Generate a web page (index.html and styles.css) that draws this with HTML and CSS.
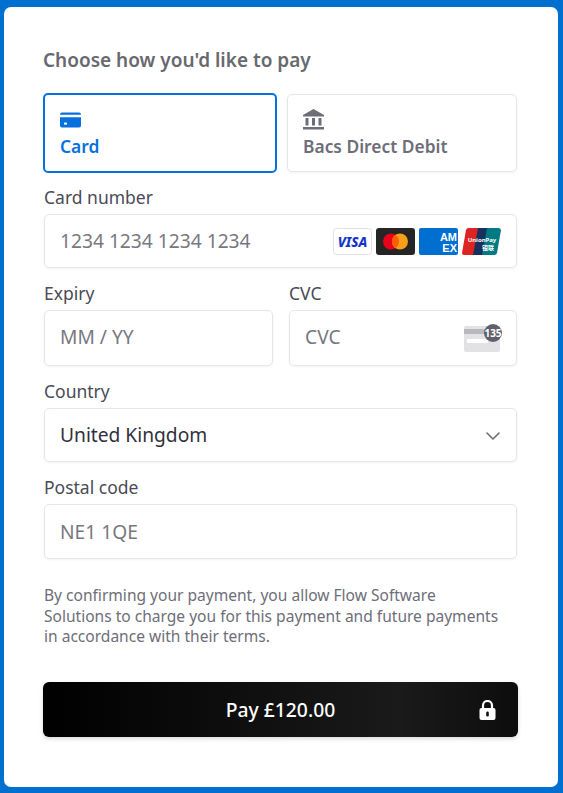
FILE: index.html
```html
<!DOCTYPE html>
<html lang="en">
<head>
<meta charset="utf-8">
<title>Payment</title>
<link rel="stylesheet" href="styles.css">
</head>
<body>
<main class="card">
  <h1 class="title">Choose how you'd like to pay</h1>
  <div class="tabs">
    <div class="tab tab-active">
      <svg class="tab-icon" viewBox="0 0 21 16" width="21" height="16"><path fill="#0570de" d="M0 2.6A2 2 0 0 1 2 .6h17a2 2 0 0 1 2 2v.2H0z"/><path fill="#0570de" d="M0 5.2h21v8.2a2 2 0 0 1-2 2H2a2 2 0 0 1-2-2z"/><rect x="4" y="10.6" width="3" height="2" fill="#fff"/></svg>
      <span>Card</span>
    </div>
    <div class="tab">
      <svg class="tab-icon" viewBox="0 0 21 21" width="21" height="21"><path fill="#6d6e78" d="M10.5 0 21 6v1.5H0V6z"/><rect x="2.5" y="9" width="3" height="7.5" fill="#6d6e78"/><rect x="9" y="9" width="3" height="7.5" fill="#6d6e78"/><rect x="15.5" y="9" width="3" height="7.5" fill="#6d6e78"/><rect x="0" y="18" width="21" height="2.5" fill="#6d6e78"/></svg>
      <span>Bacs Direct Debit</span>
    </div>
  </div>

  <div class="field field-first">
    <div class="label">Card number</div>
    <div class="input input-short">
      <span class="placeholder">1234 1234 1234 1234</span>
      <div class="brands">
        <svg viewBox="0 0 39 27" width="39" height="27"><rect x=".5" y=".5" width="38" height="26" rx="3" fill="#fff" stroke="#e0e0e6"/><text x="19.5" y="18.5" class="visa" text-anchor="middle">VISA</text></svg>
        <svg viewBox="0 0 39 27" width="39" height="27"><rect width="39" height="27" rx="3" fill="#252525"/><circle cx="15" cy="13.5" r="8" fill="#eb001b"/><circle cx="24" cy="13.5" r="8" fill="#f79e1b"/><path d="M19.5 6.9a8 8 0 0 1 0 13.200 8 8 0 0 1 0-13.200z" fill="#ff5f00"/></svg>
        <svg viewBox="0 0 39 27" width="39" height="27"><rect width="39" height="27" rx="2" fill="#016fd0"/><text x="38" y="13" class="amex" text-anchor="end">AM</text><text x="38" y="24" class="amex" text-anchor="end">EX</text></svg>
        <svg viewBox="0 0 39 27" width="39" height="27"><path d="M7 0h11l-5 27H2a2 2 0 0 1-2-2L4 2a3 3 0 0 1 3-2z" fill="#dd2423"/><path d="M16 0h11l-5 27H11z" fill="#16315e"/><path d="M25 0h11a3 3 0 0 1 3 2l-4 23a3 3 0 0 1-3 2H20z" fill="#007b84"/><text x="20" y="14" class="upay" text-anchor="middle">UnionPay</text><text x="26" y="22" class="upay" text-anchor="middle">银联</text></svg>
      </div>
    </div>
  </div>

  <div class="row">
    <div class="field">
      <div class="label">Expiry</div>
      <div class="input input-tall"><span class="placeholder">MM / YY</span></div>
    </div>
    <div class="field">
      <div class="label">CVC</div>
      <div class="input input-tall">
        <span class="placeholder">CVC</span>
        <svg class="cvc-icon" viewBox="0 0 38 29" width="38" height="29"><rect x="0" y="2" width="36" height="26" rx="2" fill="#e2e2e5"/><rect x="0" y="5" width="36" height="5" fill="#b9b9bc"/><rect x="3" y="15" width="21" height="4" fill="#fff"/><circle cx="29" cy="9" r="9" fill="#5f606c"/><text x="29" y="12.5" class="cvc-num" text-anchor="middle">135</text></svg>
      </div>
    </div>
  </div>

  <div class="field">
    <div class="label">Country</div>
    <div class="input input-short">
      <span class="value">United Kingdom</span>
      <svg class="chev" viewBox="0 0 14 8" width="14" height="8"><path d="M1 1l6 6 6-6" fill="none" stroke="#6d6e78" stroke-width="1.6" stroke-linecap="round" stroke-linejoin="round"/></svg>
    </div>
  </div>

  <div class="field">
    <div class="label">Postal code</div>
    <div class="input input-postal"><span class="placeholder">NE1 1QE</span></div>
  </div>

  <p class="terms">By confirming your payment, you allow Flow Software Solutions to charge you for this payment and future payments in accordance with their terms.</p>

  <button class="pay" type="button">
    <span>Pay £120.00</span>
    <svg class="lock" viewBox="0 0 17 20" width="17" height="20"><path fill="none" stroke="#fff" stroke-width="2.2" d="M4 9V5.5a4.5 4.5 0 0 1 9 0V9"/><rect x="0.5" y="8" width="16" height="12" rx="2" fill="#fff"/><rect x="7.2" y="11.5" width="2.6" height="5" rx="1.3" fill="#111"/></svg>
  </button>
</main>
</body>
</html>
```
FILE: styles.css
```css
* { box-sizing: border-box; }
html, body { height: 100%; }
body {
  margin: 0;
  background: #0070d0;
  padding: 7px 5px 6px 4px;
  font-family: "Noto Sans", "Open Sans", sans-serif;
  color: #30313d;
}
.card {
  height: 780px;
  background: #fff;
  border-radius: 7px;
  padding: 39px 40px 0 39px;
}
.title {
  margin: 0;
  font-size: 19px;
  line-height: 28px;
  font-weight: 600;
  color: #68696f;
}
.tabs {
  display: grid;
  grid-template-columns: 234px 230px;
  gap: 10px;
  align-items: center;
  margin-top: 19px;
}
.tab {
  height: 78px;
  border: 1px solid #e6e6e6;
  border-radius: 5px;
  padding: 14px 15px 0;
  display: flex;
  flex-direction: column;
  align-items: flex-start;
  font-size: 17.4px;
  line-height: 22px;
  font-weight: 600;
  color: #6d6e78;
  box-shadow: 0 1px 3px rgba(0,0,0,.05);
}
.tab-icon { display: block; margin-bottom: 5px; }
.tab-active {
  height: 80px;
  border: 2px solid #0570de;
  color: #0570de;
  padding: 17px 15px 0;
  box-shadow: none;
}
.tab-active .tab-icon { margin-bottom: 7px; }
.field { margin-top: 15px; min-width: 0; }
.field-first { margin-top: 14px; }
.label {
  font-size: 17.5px;
  line-height: 20px;
  color: #4a4b57;
  margin-bottom: 7px;
  padding-left: 1px;
}
.input {
  height: 55px;
  margin: 0 1px;
  border: 1px solid #e6e6e6;
  border-radius: 5px;
  padding: 0 15px;
  display: flex;
  align-items: center;
  justify-content: space-between;
  font-size: 19.2px;
  box-shadow: 0 1px 3px rgba(0,0,0,.05);
}
.input-tall { height: 56px; }
.input-short { height: 54px; }
.placeholder { color: #77787f; margin-bottom: 2px; }
.input-tall .placeholder { margin-bottom: 4px; }
.input-postal .placeholder { margin-bottom: 0; }
.value { color: #30313d; margin-bottom: 2px; }
.brands { display: flex; gap: 4px; }
.brands svg { display: block; }
.visa { font: italic 800 13.5px "Noto Sans", sans-serif; fill: #1434cb; }
.amex { font: 800 11px "Liberation Sans", sans-serif; fill: #fff; }
.upay { font: 700 6px "Noto Sans", "Noto Sans CJK SC", sans-serif; fill: #fff; }
.row { display: grid; grid-template-columns: 230px 229px; gap: 15px; }
.row .input { margin-right: 0; }
.cvc-num { font: 700 10px "Noto Sans", sans-serif; fill: #fff; }
.cvc-icon { display: block; margin-right: -1px; }
.chev { margin: 2px 1px 0 0; }
.terms {
  margin: 26px 0 0;
  padding-left: 1px;
  font-size: 15.55px;
  line-height: 20.5px;
  color: #6d6e78;
  width: 462px;
}
.pay {
  position: relative;
  display: flex;
  align-items: center;
  justify-content: center;
  width: 475px;
  height: 55px;
  margin: 35px 0 0;
  border: 0;
  border-radius: 6px;
  background: linear-gradient(90deg, #000 0%, #1a1a1a 75%, #0d0d0d 100%);
  color: #fff;
  font: 500 19.3px "Noto Sans", sans-serif;
  box-shadow: 0 2px 4px rgba(0,0,0,.15);
}
.lock { position: absolute; right: 22px; top: 18px; }
```
